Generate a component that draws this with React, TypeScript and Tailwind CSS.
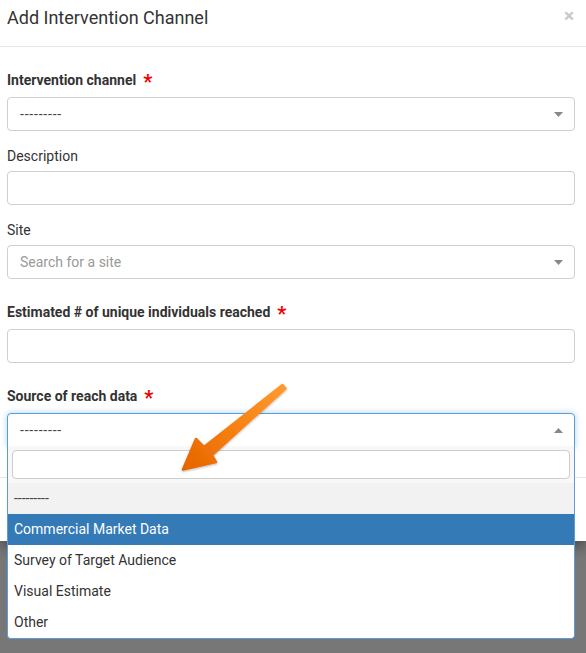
import { ReactNode } from "react";

function Caret({ up = false }: { up?: boolean }) {
  return (
    <svg width="9" height="5" viewBox="0 0 9 5" className="shrink-0">
      {up ? <path d="M0 5 L4.5 0 L9 5 Z" fill="#888" /> : <path d="M0 0 L9 0 L4.5 5 Z" fill="#888" />}
    </svg>
  );
}

function Label({ children, required = false }: { children: ReactNode; required?: boolean }) {
  if (required) {
    return (
      <div className="pt-[8px] mb-[7px] flex h-[28px] items-center text-[14px] font-bold text-[#333]">
        {children}
        <span className="ml-[7px] mt-[4px] text-[20px] leading-none font-bold text-[#e00]">*</span>
      </div>
    );
  }
  return <div className="mb-[5px] flex h-[20px] items-center text-[14px] text-[#333]">{children}</div>;
}

function SelectBox({ text, placeholder = false }: { text: string; placeholder?: boolean }) {
  return (
    <div className="flex h-[34px] items-center justify-between rounded-[4px] border border-[#cfcfcf] bg-white pl-[12px] pr-[11px]">
      {placeholder ? (
        <span className="text-[14px] text-[#999]">{text}</span>
      ) : (
        <span className="text-[14px] tracking-[0.8px] text-[#444]">{text}</span>
      )}
      <Caret />
    </div>
  );
}

function TextBox() {
  return <div className="h-[34px] rounded-[4px] border border-[#cfcfcf] bg-white" />;
}

const options = ["Commercial Market Data", "Survey of Target Audience", "Visual Estimate", "Other"];

export default function App() {
  return (
    <div className="relative h-[653px] w-[586px] overflow-hidden bg-[#777] font-['Roboto',sans-serif]">
      <div className="bg-white shadow-[0_4px_14px_rgba(0,0,0,0.45)]">
        {/* header */}
        <div className="flex h-[47px] items-start justify-between border-b border-[#e5e5e5] pl-[7px] pr-[12px] pt-[6px]">
          <h1 className="text-[18px] leading-[24px] text-[#333]">Add Intervention Channel</h1>
          <span className="text-[19px] leading-[20px] font-bold text-[#c8c8c8]">×</span>
        </div>

        {/* body */}
        <div className="pl-[7px] pr-[11px] pt-[15px] pb-[15px] text-[#333]">
          <div className="mb-[15px]">
            <Label required>Intervention channel</Label>
            <SelectBox text="---------" />
          </div>
          <div className="mb-[15px]">
            <Label>Description</Label>
            <TextBox />
          </div>
          <div className="mb-[15px]">
            <Label>Site</Label>
            <SelectBox text="Search for a site" placeholder />
          </div>
          <div className="mb-[15px]">
            <Label required>Estimated # of unique individuals reached</Label>
            <TextBox />
          </div>
          <div className="mb-[15px]">
            <Label required>Source of reach data</Label>
            <div className="relative">
              <div className="flex h-[34px] items-center justify-between rounded-t-[4px] border border-[#5b9dd9] bg-white pl-[12px] pr-[11px] shadow-[0_0_6px_rgba(102,175,233,0.55)]">
                <span className="text-[14px] tracking-[0.8px] text-[#444]">---------</span>
                <Caret up />
              </div>

              {/* open dropdown */}
              <div className="absolute left-0 right-0 top-[33px] z-10 overflow-hidden rounded-b-[4px] border border-t-0 border-[#5b9dd9] bg-white">
                <div className="bg-[#f8f8f8] p-[4px]">
                  <div className="h-[29px] rounded-[4px] border border-[#cccccc] bg-white" />
                </div>
                <div className="flex h-[31px] items-center bg-[#f2f2f2] pl-[6px] text-[14px] text-[#444]">---------</div>
                {options.map((o, i) => (
                  <div
                    key={o}
                    className={
                      i === 0
                        ? "flex h-[31px] items-center bg-[#337ab7] pl-[6px] text-[14px] text-white"
                        : "flex h-[31px] items-center pl-[6px] text-[14px] text-[#333]"
                    }
                  >
                    {o}
                  </div>
                ))}
              </div>
            </div>
          </div>
        </div>

        {/* footer */}
        <div className="h-[64px] border-t border-[#e5e5e5]" />
      </div>

      {/* annotation arrow */}
      <svg className="pointer-events-none absolute left-0 top-0 z-20" width="586" height="653" viewBox="0 0 586 653">
        <defs>
          <linearGradient id="arrowGrad" x1="284" y1="386" x2="182" y2="470" gradientUnits="userSpaceOnUse">
            <stop offset="0" stopColor="#ff9a2e" />
            <stop offset="0.6" stopColor="#f57a0c" />
            <stop offset="1" stopColor="#e36400" />
          </linearGradient>
          <filter id="arrowShadow" x="-20%" y="-20%" width="140%" height="140%">
            <feDropShadow dx="0" dy="1" stdDeviation="1.2" floodColor="#000" floodOpacity="0.3" />
          </filter>
        </defs>
        <path
          d="M282.5 385 L204 447 L196 439 L183 469.5 L216 462 L212 455 L285.5 388.5 Z"
          fill="url(#arrowGrad)"
          stroke="url(#arrowGrad)"
          strokeWidth="2.5"
          strokeLinejoin="round"
          filter="url(#arrowShadow)"
        />
      </svg>
    </div>
  );
}
